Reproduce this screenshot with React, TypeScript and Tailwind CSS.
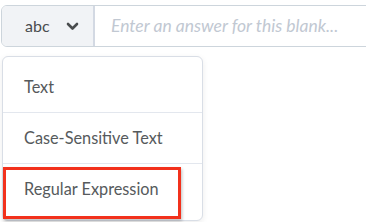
export default function App() {
  return (
    <div className="relative w-[366px] h-[222px] overflow-hidden bg-white pt-[5px] pl-[1px]" style={{ fontFamily: 'Lato, "Noto Sans", sans-serif' }}>
      <div className="flex w-[380px] h-[42px] rounded-l-[6px] border border-[#cdd5dc] overflow-hidden">
        <div className="flex w-[93px] items-center bg-[#f1f3f6] border-r-2 border-[#d3d9e3] pl-[23px] pr-[14px]">
          <span className="text-[16px] text-[#494c4e]">abc</span>
          <svg className="ml-auto" width="13" height="9" viewBox="0 0 13 9">
            <path d="M2 2 L6.5 6.5 L11 2" fill="none" stroke="#494c4e" strokeWidth="2.6" strokeLinecap="round" strokeLinejoin="round" />
          </svg>
        </div>
        <div className="flex flex-1 items-center bg-white pl-[16px]">
          <span className="text-[17.5px] italic text-[#c1c8d2]">Enter an answer for this blank...</span>
        </div>
      </div>

      <div className="absolute left-[2px] top-[56px] w-[201px] h-[165px] rounded-[6px] border border-[#d9dee6] bg-white py-[5px] shadow-[0_2px_6px_rgba(0,0,0,0.08)]">
        <div className="flex h-[51px] items-center border-b border-[#e3e7ee] pl-[21px] text-[16.3px] text-[#565a5c]">Text</div>
        <div className="flex h-[51px] items-center border-b border-[#e3e7ee] pl-[21px] text-[16.3px] text-[#565a5c]">Case-Sensitive Text</div>
        <div className="flex h-[51px] items-center pl-[21px] text-[16.3px] text-[#565a5c]">Regular Expression</div>
      </div>

      <div className="absolute left-[3px] top-[167px] w-[178px] h-[52px] border-[3px] border-[#f2311c] shadow-[1px_2px_3px_rgba(0,0,0,0.25)]" />
    </div>
  );
}
